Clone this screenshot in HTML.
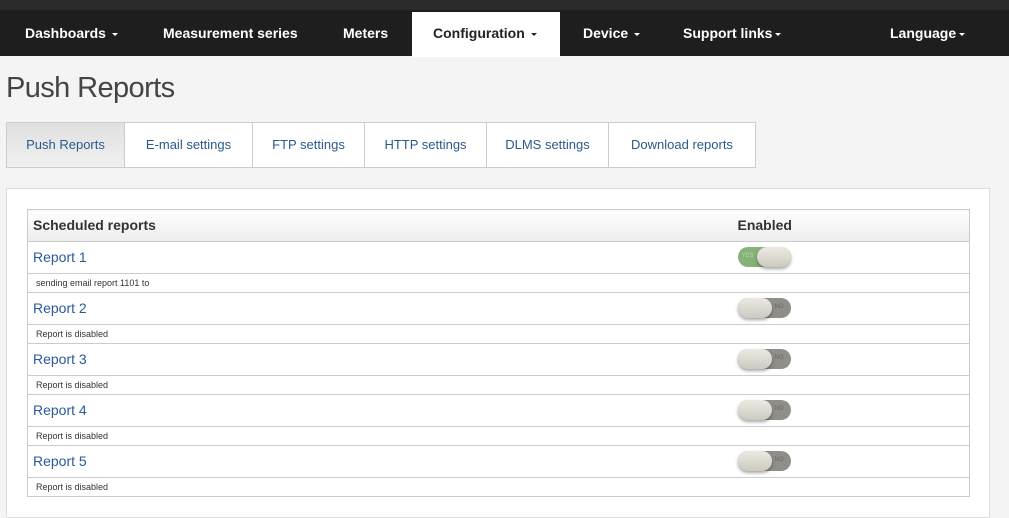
<!DOCTYPE html>
<html><head><style>
*{box-sizing:border-box;margin:0;padding:0}
body{width:1009px;height:506px;overflow:hidden;background:#f4f4f4;font-family:"Liberation Sans",sans-serif;position:relative}
.top{position:absolute;left:0;top:0;width:1009px;height:10px;background:#2b2b2b}
.nav{position:absolute;left:0;top:10px;width:1009px;height:46px;background:#1e1e1e}
.nav span{position:absolute;top:15px;color:#fff;font-weight:bold;font-size:14px;white-space:nowrap}
.cfg{position:absolute;left:412px;top:12px;width:148px;height:45px;background:#fff}
.caret{display:inline-block;width:0;height:0;border-left:3px solid transparent;border-right:3px solid transparent;border-top:3px solid currentColor;vertical-align:middle;margin-left:6px}
h1{position:absolute;left:6px;top:72px;font-weight:normal;font-size:29px;color:#444;letter-spacing:-0.6px}
.tabs{position:absolute;left:6px;top:122px;height:46px;display:flex;border:1px solid #ccc;background:#fff}
.tabs div{height:44px;line-height:44px;font-size:13px;color:#2a5a8a;border-right:1px solid #ccc;text-align:center}
.tabs div:last-child{border-right:none}
.tabs .act{background:linear-gradient(#e0e0e0,#f0f0f0)}
.panel{position:absolute;left:6px;top:188px;width:984px;height:330px;background:#fff;border:1px solid #ddd}
table{position:absolute;left:27px;top:209px;width:943px;border-collapse:collapse}
td,th{border-top:1px solid #ccc;border-bottom:1px solid #ccc}
table{border-left:1px solid #ccc;border-right:1px solid #ccc}
th{height:32px;text-align:left;font-size:14px;color:#333;font-weight:bold;background:linear-gradient(#fff,#ececec);padding-left:5px;padding-bottom:2px}
.r td{height:32px;font-size:14px;color:#2a5a9a;padding-left:5px;padding-bottom:2px}
.s td{height:19px;font-size:9px;color:#333;padding-left:8px}
.tg{position:relative;width:53px;height:20px;border-radius:10px}
.on{background:#86b27a}.off{background:#8f8e89}
.tg b{position:absolute;top:0;width:34px;height:20px;border-radius:10px;background:linear-gradient(#ebe9e2,#cdcbc0);box-shadow:0 2px 3px rgba(0,0,0,.35)}
.on b{right:0}.off b{left:0}
.tg i{position:absolute;top:6px;font-size:6px;font-style:normal}
.on i{left:4px;color:#b8d6a8}.off i{right:7px;color:#666}
</style></head><body>
<div class="top"></div>
<div class="nav">
<span style="left:25px">Dashboards<i class="caret"></i></span>
<span style="left:163px">Measurement series</span>
<span style="left:343px">Meters</span>
<span style="left:583px">Device<i class="caret"></i></span>
<span style="left:683px">Support links<i class="caret" style="margin-left:3px"></i></span>
<span style="left:890px">Language<i class="caret" style="margin-left:3px"></i></span>
</div>
<div class="cfg"><span style="position:absolute;left:21px;top:13px;color:#222;font-weight:bold;font-size:14px;white-space:nowrap">Configuration<i class="caret"></i></span></div>
<h1>Push Reports</h1>
<div class="tabs">
<div class="act" style="width:118px">Push Reports</div>
<div style="width:128px">E-mail settings</div>
<div style="width:112px">FTP settings</div>
<div style="width:122px">HTTP settings</div>
<div style="width:122px">DLMS settings</div>
<div style="width:146px">Download reports</div>
</div>
<div class="panel"></div>
<table>
<tr><th style="width:705px">Scheduled reports</th><th>Enabled</th></tr>
<tr class="r"><td>Report 1</td><td><div class="tg on"><i>YES</i><b></b></div></td></tr>
<tr class="s"><td colspan="2">sending email report 1101 to</td></tr>
<tr class="r"><td>Report 2</td><td><div class="tg off"><i>NO</i><b></b></div></td></tr>
<tr class="s"><td colspan="2">Report is disabled</td></tr>
<tr class="r"><td>Report 3</td><td><div class="tg off"><i>NO</i><b></b></div></td></tr>
<tr class="s"><td colspan="2">Report is disabled</td></tr>
<tr class="r"><td>Report 4</td><td><div class="tg off"><i>NO</i><b></b></div></td></tr>
<tr class="s"><td colspan="2">Report is disabled</td></tr>
<tr class="r"><td>Report 5</td><td><div class="tg off"><i>NO</i><b></b></div></td></tr>
<tr class="s"><td colspan="2">Report is disabled</td></tr>
</table>
</body></html>
